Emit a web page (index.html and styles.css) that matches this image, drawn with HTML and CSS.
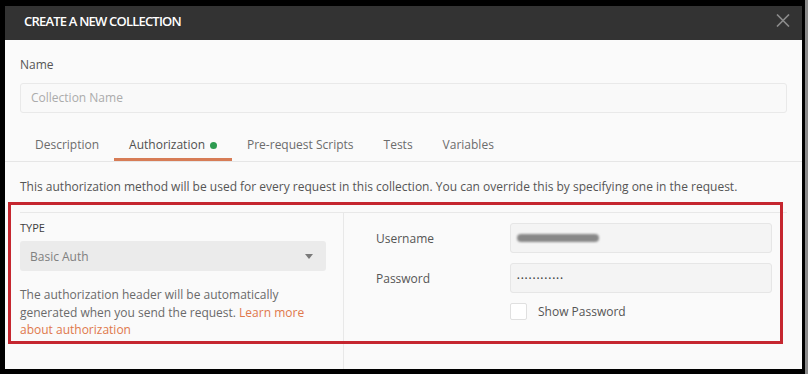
FILE: index.html
```html
<!DOCTYPE html>
<html lang="en">
<head>
    <meta charset="UTF-8">
    <title>Create a New Collection</title>
    <link rel="stylesheet" href="styles.css">
</head>
<body>
    <div class="modal">
        <div class="modal-header">
            <span class="modal-title">CREATE A NEW COLLECTION</span>
            <svg class="close" width="14" height="13" viewBox="0 0 14 13">
                <path d="M1 0.5 L13 12.5 M13 0.5 L1 12.5" stroke="#8c8c8c" stroke-width="1.6" fill="none"/>
            </svg>
        </div>
        <div class="modal-body">
            <div class="name-section">
                <label class="field-label">Name</label>
                <div class="text-input placeholder">Collection Name</div>
            </div>
            <div class="tabs">
                <div class="tab">Description</div>
                <div class="tab active">Authorization <span class="dot"></span></div>
                <div class="tab">Pre-request Scripts</div>
                <div class="tab">Tests</div>
                <div class="tab">Variables</div>
            </div>
            <p class="auth-intro">This authorization method will be used for every request in this collection. You can override this by specifying one in the request.</p>
            <div class="auth-panel">
                <div class="auth-left">
                    <div class="type-label">TYPE</div>
                    <div class="select">
                        <span>Basic Auth</span>
                        <span class="caret"></span>
                    </div>
                    <p class="help">The authorization header will be automatically generated when you send the request. <a href="#">Learn more about authorization</a></p>
                </div>
                <div class="auth-right">
                    <div class="row">
                        <span class="row-label">Username</span>
                        <div class="field"><span class="blurred"></span></div>
                    </div>
                    <div class="row">
                        <span class="row-label">Password</span>
                        <div class="field"><span class="dots">&bull;&bull;&bull;&bull;&bull;&bull;&bull;&bull;&bull;&bull;&bull;&bull;</span></div>
                    </div>
                    <div class="row check-row">
                        <span class="row-label"></span>
                        <span class="checkbox"></span>
                        <span class="check-text">Show Password</span>
                    </div>
                </div>
            </div>
        </div>
        <div class="highlight"></div>
    </div>
</body>
</html>
```

FILE: styles.css
```css
html {
    background: #000;
}

body {
    margin: 0;
    height: 374px;
    overflow: hidden;
    border-right: 3px solid #8a8a8a;
    font-family: "Open Sans", "Liberation Sans", sans-serif;
    font-size: 12px;
    color: #505050;
}

.modal {
    position: relative;
    margin: 6px 0 0 5px;
    width: 797px;
    height: 363px;
    background: #fafafa;
    display: flex;
    flex-direction: column;
    overflow: hidden;
}

.modal-header {
    height: 34px;
    box-sizing: border-box;
    flex: none;
    background: #333;
    display: flex;
    align-items: center;
    justify-content: space-between;
    padding: 0 12px 5px 19px;
}

.modal-title {
    color: #fff;
    font-size: 13px;
    font-weight: 600;
    letter-spacing: -0.8px;
}

.modal-body {
    flex: 1;
    display: flex;
    flex-direction: column;
}

.name-section {
    padding: 16px 15px 0;
}

.field-label {
    display: block;
    line-height: 18px;
    color: #555;
}

.text-input {
    margin-top: 9px;
    height: 30px;
    box-sizing: border-box;
    border: 1px solid #e9e9e9;
    border-radius: 3px;
    background: #f9f9f9;
    padding: 0 10px;
    line-height: 28px;
}

.placeholder {
    color: #ababab;
}

.tabs {
    display: flex;
    margin-top: 16px;
    padding-left: 15px;
    border-bottom: 1px solid #e6e6e6;
}

.tab {
    padding: 7px 15px;
    line-height: 18px;
    color: #6c6c6c;
    display: flex;
    align-items: center;
}

.tab.active {
    color: #505050;
    box-shadow: inset 0 -3px 0 #d77c56;
}

.dot {
    width: 7px;
    height: 7px;
    border-radius: 50%;
    background: #2e9b50;
    margin-left: 5px;
}

.auth-intro {
    margin: 16px 15px 0;
    line-height: 18px;
    color: #555;
}

.auth-panel {
    flex: 1;
    display: flex;
    margin: 16px 15px 0;
    border-top: 1px solid #e8e8e8;
}

.auth-left {
    width: 306px;
    padding: 7px 17px 0 0;
    border-right: 1px solid #e8e8e8;
}

.type-label {
    font-size: 11px;
    line-height: 16px;
    color: #404040;
}

.select {
    margin-top: 5px;
    height: 30px;
    border-radius: 3px;
    background: #ebebeb;
    display: flex;
    align-items: center;
    justify-content: space-between;
    padding: 0 13px 0 10px;
    color: #808080;
}

.caret {
    width: 0;
    height: 0;
    border-left: 4px solid transparent;
    border-right: 4px solid transparent;
    border-top: 5px solid #7a7a7a;
}

.help {
    margin: 15px 0 0;
    line-height: 17.5px;
    color: #6a6a6a;
}

.help a {
    color: #e0784b;
    text-decoration: none;
}

.auth-right {
    flex: 1;
    padding: 10px 0 0 32px;
}

.row {
    display: flex;
    align-items: center;
    margin-bottom: 10px;
}

.row-label {
    width: 134px;
    flex: none;
    color: #555;
}

.field {
    width: 262px;
    height: 30px;
    box-sizing: border-box;
    border: 1px solid #e6e6e6;
    border-radius: 3px;
    background: #f4f4f4;
    display: flex;
    align-items: center;
    padding: 0 6px;
}

.blurred {
    width: 82px;
    height: 8px;
    border-radius: 4px;
    background: #888;
    filter: blur(1px);
}

.dots {
    font-size: 7px;
    letter-spacing: 1.3px;
    color: #444;
}

.checkbox {
    width: 17px;
    height: 17px;
    box-sizing: border-box;
    border: 1px solid #e0e0e0;
    border-radius: 2px;
    background: #fff;
}

.check-text {
    margin-left: 11px;
    color: #555;
}

.highlight {
    position: absolute;
    left: 3px;
    top: 196px;
    width: 775px;
    height: 142px;
    box-sizing: border-box;
    border: 3px solid #c5262f;
}
```
